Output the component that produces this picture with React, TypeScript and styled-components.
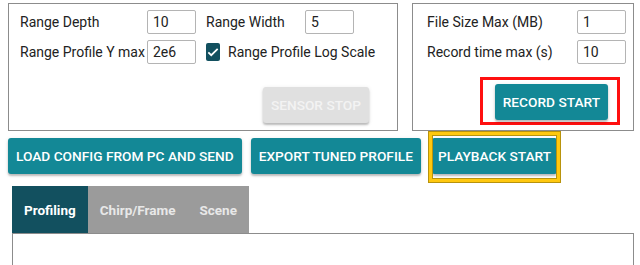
import styled, { createGlobalStyle } from 'styled-components';
import { ReactNode } from 'react';

const GlobalStyle = createGlobalStyle`
  body {
    margin: 0;
    background: #ffffff;
    font-family: Roboto, "Liberation Sans", Arial, sans-serif;
    color: #222222;
  }
`;

const TEAL = '#138896';
const DARK_TEAL = '#12505f';

const Page = styled.div`
  width: 640px;
  padding: 3px 0 0 8px;
  box-sizing: border-box;
`;

const TopRow = styled.div`
  display: flex;
  gap: 14px;
`;

const Panel = styled.div<{ $width: number }>`
  width: ${(p) => p.$width}px;
  height: 128px;
  box-sizing: border-box;
  border: 1px solid #8c8c8c;
  display: flex;
  flex-direction: column;
`;

const SettingsGrid = styled.div`
  display: grid;
  grid-template-columns: 122px 49px 99px 49px;
  column-gap: 5px;
  row-gap: 6px;
  padding: 6px 0 0 11px;
  align-items: center;
  & > :nth-child(3),
  & > :nth-child(7) {
    margin-left: 5px;
  }
`;

const Label = styled.span`
  font-size: 14px;
  line-height: 24px;
  color: #222;
  white-space: nowrap;
`;

const Input = styled.input`
  width: 49px;
  height: 24px;
  box-sizing: border-box;
  border: 1px solid #b4b4b4;
  border-radius: 2px;
  padding: 0 5px;
  font-family: Roboto, "Liberation Sans", Arial, sans-serif;
  font-size: 14px;
  color: #222;
  outline: none;
`;

const CheckRow = styled.label`
  grid-column: span 2;
  display: flex;
  align-items: center;
  gap: 8px;
`;

const CheckBox = styled.span`
  width: 18px;
  height: 18px;
  border-radius: 2px;
  background: ${DARK_TEAL};
  display: flex;
  align-items: center;
  justify-content: center;
`;

const ActionRow = styled.div<{ $top: number; $right: number }>`
  display: flex;
  justify-content: flex-end;
  margin-top: ${(p) => p.$top}px;
  padding-right: ${(p) => p.$right}px;
`;

const Button = styled.button<{ $disabled?: boolean; $tight?: boolean }>`
  height: 36px;
  padding: 0 ${(p) => (p.$tight ? 5 : 8)}px;
  border: none;
  border-radius: ${(p) => (p.$tight ? '1px' : '3px')};
  background: ${(p) => (p.$disabled ? '#e0e0e0' : TEAL)};
  color: ${(p) => (p.$disabled ? '#f3f3f3' : '#ffffff')};
  font-family: Roboto, "Liberation Sans", Arial, sans-serif;
  font-size: 13.7px;
  font-weight: 500;
  text-transform: uppercase;
  white-space: nowrap;
  box-shadow: 0 2px 2px rgba(0, 0, 0, 0.22), 0 1px 4px rgba(0, 0, 0, 0.1);
  cursor: pointer;
`;

const RecordPanel = styled.div`
  padding: 6px 7px 0 14px;
  display: flex;
  flex-direction: column;
  gap: 6px;
`;

const RecordRow = styled.div`
  display: flex;
  justify-content: space-between;
  align-items: center;
`;

const RedBox = styled.div`
  border: 3px solid #ff1010;
  padding: 4px 9px 2px 12px;
`;

const ButtonRow = styled.div`
  display: flex;
  align-items: center;
  margin-top: 7px;
  gap: 9px;
`;

const Marked = styled.div`
  position: relative;
  margin-left: 3px;
`;

const YellowMark = styled.span`
  position: absolute;
  top: -7px;
  bottom: -9px;
  left: -5px;
  right: -5px;
  border: 1px solid #b8930c;
  box-shadow: inset 0 0 0 3px #ffc80f, inset 0 0 0 4px #b8930c;
  pointer-events: none;
`;

const Tabs = styled.div`
  margin: 12px 0 0 4px;
  display: flex;
`;

const Tab = styled.div<{ $active?: boolean }>`
  height: 47px;
  padding: 0 12px;
  display: flex;
  align-items: center;
  background: ${(p) => (p.$active ? DARK_TEAL : '#9b9b9b')};
  color: ${(p) => (p.$active ? '#ffffff' : '#e8e8e8')};
  font-size: 13.5px;
  font-weight: 700;
`;

const TabContent = styled.div`
  margin-left: 4px;
  width: 622px;
  height: 40px;
  box-sizing: border-box;
  border: 1px solid #8c8c8c;
  border-bottom: none;
`;

function Highlight({ children }: { children: ReactNode }) {
  return (
    <Marked>
      {children}
      <YellowMark />
    </Marked>
  );
}

export default function App() {
  return (
    <Page>
      <GlobalStyle />
      <TopRow>
        <Panel $width={390}>
          <SettingsGrid>
            <Label>Range Depth</Label>
            <Input defaultValue="10" />
            <Label>Range Width</Label>
            <Input defaultValue="5" />
            <Label>Range Profile Y max</Label>
            <Input defaultValue="2e6" />
            <CheckRow>
              <CheckBox>
                <svg width="14" height="14" viewBox="0 0 24 24">
                  <path d="M4 12.5l5 5L20 6.5" fill="none" stroke="#fff" strokeWidth="3" />
                </svg>
              </CheckBox>
              <Label>Range Profile Log Scale</Label>
            </CheckRow>
          </SettingsGrid>
          <ActionRow $top={23} $right={28}>
            <Button $disabled>Sensor Stop</Button>
          </ActionRow>
        </Panel>
        <Panel $width={222}>
          <RecordPanel>
            <RecordRow>
              <Label>File Size Max (MB)</Label>
              <Input defaultValue="1" />
            </RecordRow>
            <RecordRow>
              <Label>Record time max (s)</Label>
              <Input defaultValue="10" />
            </RecordRow>
          </RecordPanel>
          <ActionRow $top={13} $right={13}>
            <RedBox>
              <Button>Record Start</Button>
            </RedBox>
          </ActionRow>
        </Panel>
      </TopRow>
      <ButtonRow>
        <Button>Load config from PC and send</Button>
        <Button>Export tuned profile</Button>
        <Highlight>
          <Button $tight>Playback Start</Button>
        </Highlight>
      </ButtonRow>
      <Tabs>
        <Tab $active>Profiling</Tab>
        <Tab>Chirp/Frame</Tab>
        <Tab>Scene</Tab>
      </Tabs>
      <TabContent />
    </Page>
  );
}
